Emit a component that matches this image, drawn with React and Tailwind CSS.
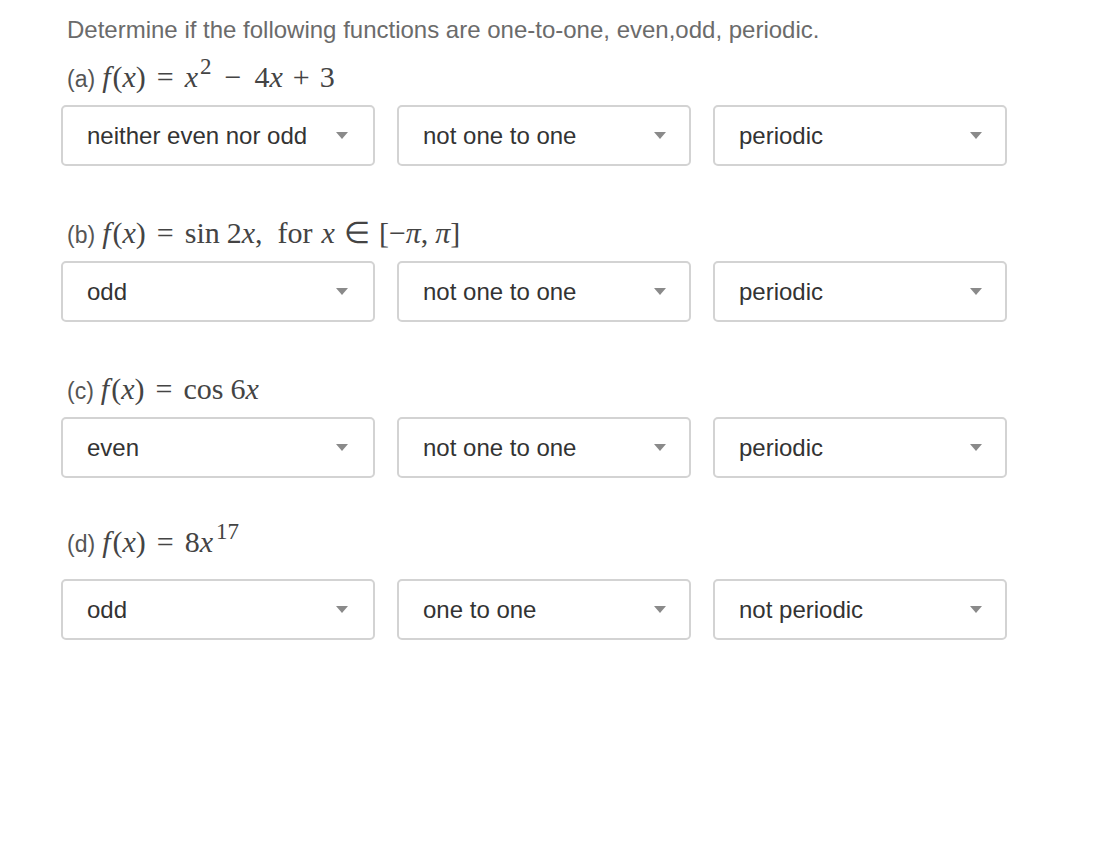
import React from "react";

const rows = [
    { label: "(a)", math: "a", values: ["neither even nor odd", "not one to one", "periodic"] },
    { label: "(b)", math: "b", values: ["odd", "not one to one", "periodic"] },
    { label: "(c)", math: "c", values: ["even", "not one to one", "periodic"] },
    { label: "(d)", math: "d", values: ["odd", "one to one", "not periodic"] },
];

function I({ children }) {
    return <span className="italic">{children}</span>;
}

function Fx() {
    return (
        <>
            <I>f</I>
            <span className="ml-[2px]">(</span>
            <I>x</I>
            <span>)</span>
            <span className="mx-[11px]">=</span>
        </>
    );
}

function Math({ which }) {
    if (which === "a") {
        return (
            <>
                <Fx />
                <I>x</I>
                <span className="relative -top-[13px] text-[23px] ml-[2px]">2</span>
                <span className="mx-[13px]">−</span>
                <span>4</span>
                <I>x</I>
                <span className="mx-[10px]">+</span>
                <span>3</span>
            </>
        );
    }
    if (which === "b") {
        return (
            <>
                <Fx />
                <span>sin</span>
                <span className="ml-[7px]">2</span>
                <I>x</I>
                <span>,</span>
                <span className="ml-[15px]">for</span>
                <I>
                    <span className="ml-[9px]">x</span>
                </I>
                <span className="mx-[9px]">∈</span>
                <span>[</span>
                <span>−</span>
                <I>π</I>
                <span>,</span>
                <I>
                    <span className="ml-[7px]">π</span>
                </I>
                <span>]</span>
            </>
        );
    }
    if (which === "c") {
        return (
            <>
                <Fx />
                <span>cos</span>
                <span className="ml-[7px]">6</span>
                <I>x</I>
            </>
        );
    }
    return (
        <>
            <Fx />
            <span>8</span>
            <I>x</I>
            <span className="relative -top-[13px] text-[23px] ml-[3px]">17</span>
        </>
    );
}

function Select({ value, wide }) {
    return (
        <div
            className={
                "flex items-center justify-between h-[61px] border-2 border-[#d3d3d3] rounded-[5px] bg-white pl-[24px] " +
                (wide ? "w-[314px] pr-[25px]" : "w-[294px] pr-[23px]")
            }
        >
            <span className="text-[24px] text-[#333]">{value}</span>
            <span className="w-0 h-0 border-l-[6px] border-r-[6px] border-t-[7px] border-l-transparent border-r-transparent border-t-[#8a8a8a]" />
        </div>
    );
}

export default function App() {
    return (
        <div className="w-[1108px] h-[854px] bg-white pl-[61px] pt-[16px]" style={{ fontFamily: '"Liberation Sans", Arial, sans-serif' }}>
            <h1 className="pl-[6px] text-[24px] leading-[28px] text-[#6b6b6b]">
                Determine if the following functions are one-to-one, even,odd, periodic.
            </h1>
            {rows.map((row, i) => (
                <div key={row.label} className={i === 0 ? "mt-[13px]" : row.math === "d" ? "mt-[44px]" : "mt-[47px]"}>
                    <div className="pl-[6px] flex items-baseline h-[40px] leading-[40px]">
                        <span className="text-[23px] text-[#555] mr-[7px]">{row.label}</span>
                        <span
                            className="text-[30px] text-[#444]"
                            style={{ fontFamily: '"Liberation Serif", "Times New Roman", serif' }}
                        >
                            <Math which={row.math} />
                        </span>
                    </div>
                    <div className={"flex gap-[22px] " + (row.math === "d" ? "mt-[17px]" : "mt-[8px]")}>
                        <Select value={row.values[0]} wide />
                        <Select value={row.values[1]} />
                        <Select value={row.values[2]} />
                    </div>
                </div>
            ))}
        </div>
    );
}
